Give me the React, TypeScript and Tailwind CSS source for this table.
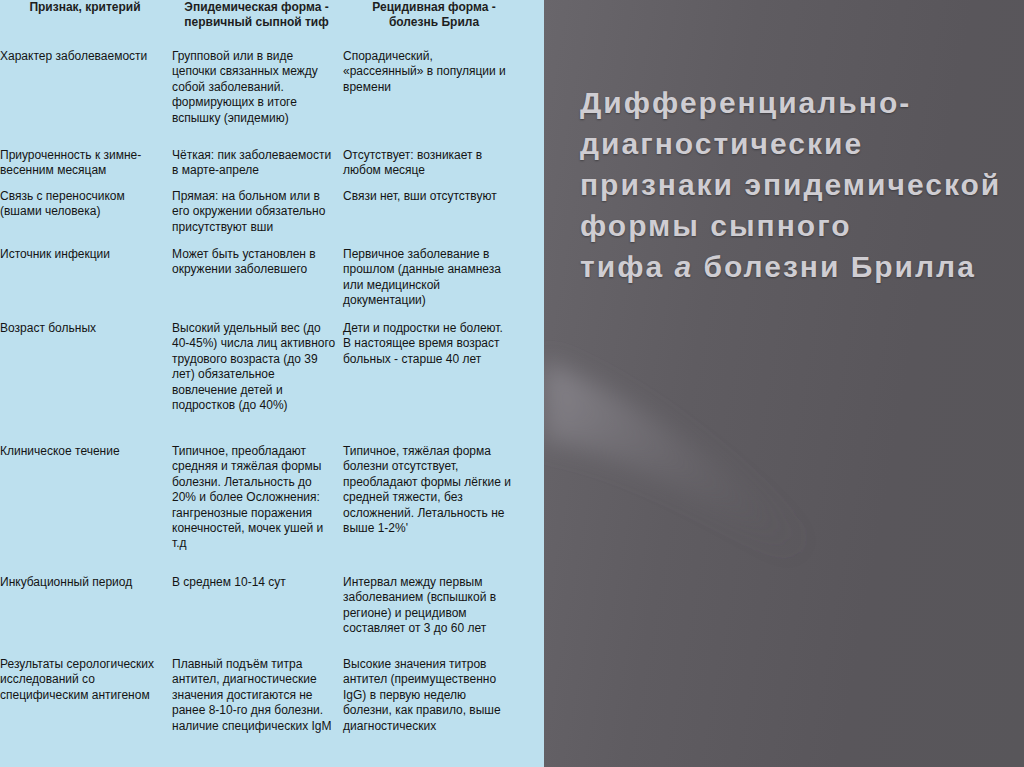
import React from 'react';

type Row = {
  h: string;
  cells: [string, string, string];
};

const rows: Row[] = [
  {
    h: 'h-[99px]',
    cells: [
      'Характер заболеваемости',
      'Групповой или в виде цепочки связанных между собой заболеваний. формирующих в итоге вспышку (эпидемию)',
      'Спорадический, «рассеянный» в популяции и времени',
    ],
  },
  {
    h: 'h-[41px]',
    cells: [
      'Приуроченность к зимне-весенним месяцам',
      'Чёткая: пик заболеваемости в марте-апреле',
      'Отсутствует: возникает в любом месяце',
    ],
  },
  {
    h: 'h-[58px]',
    cells: [
      'Связь с переносчиком (вшами человека)',
      'Прямая: на больном или в его окружении обязательно присутствуют вши',
      'Связи нет, вши отсутствуют',
    ],
  },
  {
    h: 'h-[74px]',
    cells: [
      'Источник инфекции',
      'Может быть установлен в окружении заболевшего',
      'Первичное заболевание в прошлом (данные анамнеза или медицинской документации)',
    ],
  },
  {
    h: 'h-[123px]',
    cells: [
      'Возраст больных',
      'Высокий удельный вес (до 40-45%) числа лиц активного трудового возраста (до 39 лет) обязательное вовлечение детей и подростков (до 40%)',
      'Дети и подростки не болеют. В настоящее время возраст больных - старше 40 лет',
    ],
  },
  {
    h: 'h-[131px]',
    cells: [
      'Клиническое течение',
      'Типичное, преобладают средняя и тяжёлая формы болезни. Летальность до 20% и более Осложнения: гангренозные поражения конечностей, мочек ушей и т.д',
      'Типичное, тяжёлая форма болезни отсутствует, преобладают формы лёгкие и средней тяжести, без осложнений. Летальность не выше 1-2%\'',
    ],
  },
  {
    h: 'h-[82px]',
    cells: [
      'Инкубационный период',
      'В среднем 10-14 сут',
      'Интервал между первым заболеванием (вспышкой в регионе) и рецидивом составляет от 3 до 60 лет',
    ],
  },
  {
    h: 'flex-1',
    cells: [
      'Результаты серологических исследований со специфическим антигеном',
      'Плавный подъём титра антител, диагностические значения достигаются не ранее 8-10-го дня болезни. наличие специфических IgM',
      'Высокие значения титров антител (преимущественно IgG) в первую неделю болезни, как правило, выше диагностических',
    ],
  },
];

function TableRow({ row }: { row: Row }) {
  return (
    <div className={`flex ${row.h}`}>
      <div className="w-[170px] pt-[3px] pr-1">{row.cells[0]}</div>
      <div className="w-[171px] pt-[3px] pl-[2px] pr-1">{row.cells[1]}</div>
      <div className="w-[172px] pt-[3px] pl-[2px]">{row.cells[2]}</div>
    </div>
  );
}

export default function App() {
  return (
    <div className="flex h-[767px] w-[1024px] overflow-hidden font-['Liberation_Sans',Arial,sans-serif]">
      <div className="flex w-[544px] flex-col bg-[#bde0ee] text-[12px] leading-[15.4px] text-[#141414]">
        <div className="flex h-[46px] font-bold text-[#1e1e1e]">
          <div className="w-[170px] text-center">Признак, критерий</div>
          <div className="w-[171px] pl-[2px] text-center">
            Эпидемическая форма -<br />
            первичный сыпной тиф
          </div>
          <div className="w-[184px] pl-[2px] text-center">
            Рецидивная форма -<br />
            болезнь Брила
          </div>
        </div>
        {rows.map((row, i) => (
          <TableRow key={i} row={row} />
        ))}
      </div>

      <div className="relative flex-1 overflow-hidden bg-[linear-gradient(100deg,#69666b_0%,#5f5c61_35%,#59565b_70%,#58565a_100%)]">
        <svg
          className="absolute inset-0 h-full w-full"
          viewBox="0 0 480 767"
          preserveAspectRatio="none"
        >
          <defs>
            <filter id="blur" x="-50%" y="-50%" width="200%" height="200%">
              <feGaussianBlur stdDeviation="12" />
            </filter>
            <linearGradient id="streak" x1="0" y1="0" x2="1" y2="0.6">
              <stop offset="0" stopColor="#8e8b92" stopOpacity="0.85" />
              <stop offset="0.5" stopColor="#747177" stopOpacity="0.45" />
              <stop offset="1" stopColor="#5a575c" stopOpacity="0" />
            </linearGradient>
          </defs>
          <path
            d="M0 362 C 90 395, 190 470, 300 570 L 300 600 C 200 520, 90 455, 0 440 Z"
            fill="url(#streak)"
            filter="url(#blur)"
          />
        </svg>
        <h1 className="relative mt-[82px] pl-[36px] text-[30px] font-bold leading-[41px] tracking-[2px] text-[#cfcdd2] [text-shadow:0_1px_2px_rgba(0,0,0,0.35)]">
          Дифференциально-
          <br />
          диагностические
          <br />
          признаки эпидемической
          <br />
          формы сыпного
          <br />
          тифа <span className="italic">а</span> болезни Брилла
        </h1>
      </div>
    </div>
  );
}
